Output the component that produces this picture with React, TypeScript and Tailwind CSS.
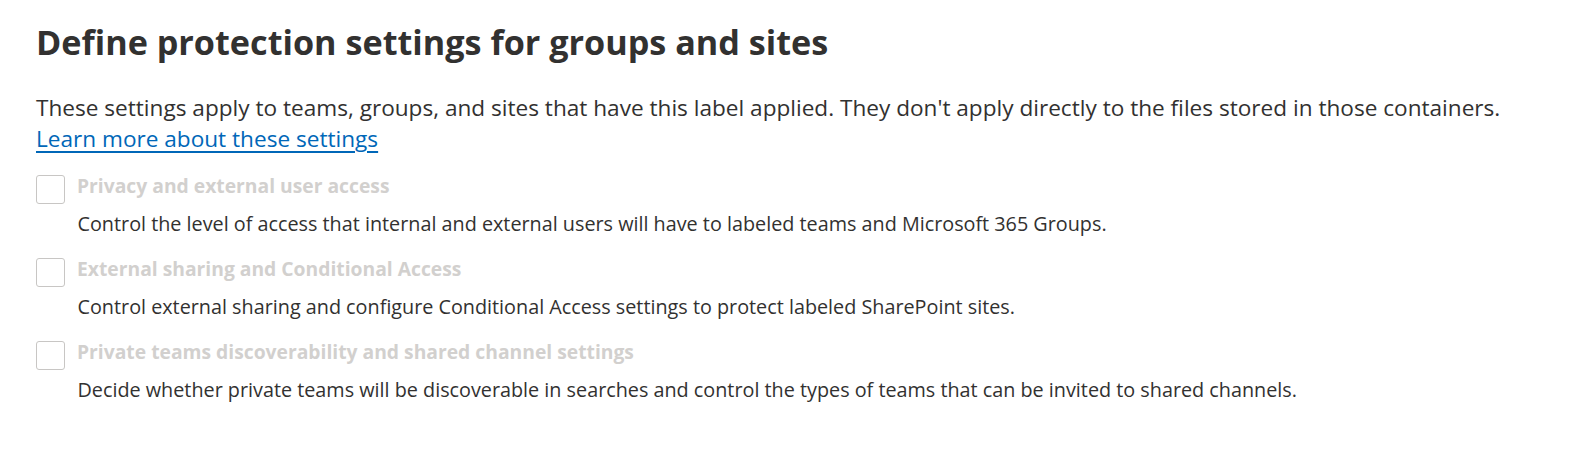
import React from "react";

interface SettingOptionProps {
  title: string;
  description: string;
}

const SettingOption: React.FC<SettingOptionProps> = ({ title, description }) => (
  <div className="flex flex-col mb-[20px]">
    <div className="flex items-start">
      <div className="w-[29px] h-[29px] shrink-0 rounded-[3px] border border-[#c8c6c4] bg-white"></div>
      <span className="ml-[12px] text-[19.3px] leading-[21px] font-bold text-[#d2d0ce]">{title}</span>
    </div>
    <p className="mt-[6px] ml-[41.5px] text-[19.8px] leading-[28px] text-[#323130]">{description}</p>
  </div>
);

const options: SettingOptionProps[] = [
  {
    title: "Privacy and external user access",
    description:
      "Control the level of access that internal and external users will have to labeled teams and Microsoft 365 Groups.",
  },
  {
    title: "External sharing and Conditional Access",
    description:
      "Control external sharing and configure Conditional Access settings to protect labeled SharePoint sites.",
  },
  {
    title: "Private teams discoverability and shared channel settings",
    description:
      "Decide whether private teams will be discoverable in searches and control the types of teams that can be invited to shared channels.",
  },
];

export default function App() {
  return (
    <div
      className="w-[1594px] h-[454px] bg-white pl-[36px] pt-[19px] overflow-hidden"
      style={{ fontFamily: '"Open Sans", "Noto Sans", sans-serif' }}
    >
      <h1 className="text-[34.2px] leading-[46px] font-bold text-[#323130]">
        Define protection settings for groups and sites
      </h1>
      <div className="mt-[27px] text-[22.6px] leading-[31px] text-[#323130]">
        <p>
          These settings apply to teams, groups, and sites that have this label applied. They don't apply directly to
          the files stored in those containers.
        </p>
        <a href="#" className="text-[#0067b8] underline underline-offset-[4px] decoration-[1.5px]">
          Learn more about these settings
        </a>
      </div>
      <div className="mt-[20.5px]">
        {options.map((o) => (
          <SettingOption key={o.title} {...o} />
        ))}
      </div>
    </div>
  );
}
